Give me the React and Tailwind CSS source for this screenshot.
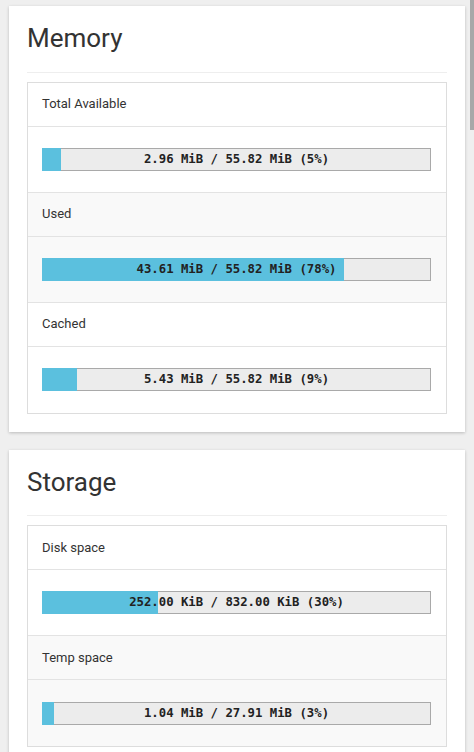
const sections = [
  {
    title: 'Memory',
    items: [
      { label: 'Total Available', text: '2.96 MiB / 55.82 MiB (5%)', pct: 5 },
      { label: 'Used', text: '43.61 MiB / 55.82 MiB (78%)', pct: 78 },
      { label: 'Cached', text: '5.43 MiB / 55.82 MiB (9%)', pct: 9 },
    ],
  },
  {
    title: 'Storage',
    items: [
      { label: 'Disk space', text: '252.00 KiB / 832.00 KiB (30%)', pct: 30 },
      { label: 'Temp space', text: '1.04 MiB / 27.91 MiB (3%)', pct: 3 },
    ],
  },
]

function Bar({ text, pct }) {
  return (
    <div className="relative w-full h-[23px] border border-[#a9a9a9] bg-[#ececec]">
      <div className="-ml-px -mt-px h-[23px] bg-[#5bc0de]" style={{ width: pct + '%' }} />
      <div
        className="absolute inset-0 flex items-center justify-center text-[12.3px] font-bold text-[#222] whitespace-nowrap"
        style={{ fontFamily: '"DejaVu Sans Mono", monospace' }}
      >
        {text}
      </div>
    </div>
  )
}

function Section({ title, items }) {
  return (
    <div className="bg-white px-[18px] pt-[18px] pb-[18px] shadow-[0_1px_3px_rgba(0,0,0,0.22)]">
      <h2 className="text-[26px] leading-[1.1] text-[#333] pb-[19px] border-b border-[#eee]">{title}</h2>
      <div className="mt-[9px] border border-[#ddd]">
        {items.map((it, i) => (
          <div key={it.label} className={i % 2 === 1 ? 'bg-[#f9f9f9]' : 'bg-white'}>
            <div className="h-[44px] flex items-center px-[14px] border-b border-[#e3e3e3] text-[13px] text-[#333]">
              {it.label}
            </div>
            <div
              className={
                'h-[66px] flex items-center pl-[14px] pr-[15px]' +
                (i < items.length - 1 ? ' border-b border-[#e3e3e3]' : '')
              }
            >
              <Bar text={it.text} pct={it.pct} />
            </div>
          </div>
        ))}
      </div>
    </div>
  )
}

export default function App() {
  return (
    <div
      className="relative h-screen overflow-hidden bg-[#efefef] px-[9px] pt-[6px] flex flex-col gap-[18px]"
      style={{ fontFamily: 'Roboto, "Noto Sans", sans-serif' }}
    >
      {sections.map((s) => (
        <Section key={s.title} {...s} />
      ))}
      <div className="absolute top-0 right-0 w-[4px] h-[130px] bg-[#a8a8a8]" />
    </div>
  )
}
